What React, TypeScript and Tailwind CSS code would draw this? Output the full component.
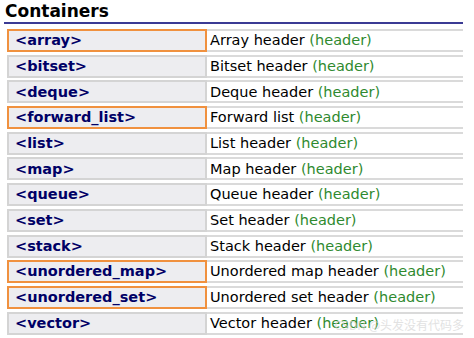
import React from 'react';

const rows = [
  { name: '<array>', desc: 'Array header', hl: true },
  { name: '<bitset>', desc: 'Bitset header', hl: false },
  { name: '<deque>', desc: 'Deque header', hl: false },
  { name: '<forward_list>', desc: 'Forward list', hl: true },
  { name: '<list>', desc: 'List header', hl: false },
  { name: '<map>', desc: 'Map header', hl: false },
  { name: '<queue>', desc: 'Queue header', hl: false },
  { name: '<set>', desc: 'Set header', hl: false },
  { name: '<stack>', desc: 'Stack header', hl: false },
  { name: '<unordered_map>', desc: 'Unordered map header', hl: true },
  { name: '<unordered_set>', desc: 'Unordered set header', hl: true },
  { name: '<vector>', desc: 'Vector header', hl: false },
];

export default function App() {
  return (
    <div className="relative w-[474px] h-[338px] bg-white overflow-hidden font-['DejaVu_Sans',Verdana,sans-serif]">
      <div className="pl-[5px] pt-[2px] w-[463px]">
        <h1 className="text-[17px] font-bold leading-[19px] text-black">Containers</h1>
        <div className="mt-[1px] h-[2px] bg-[#3b3b94] ml-[-1px]" />
      </div>

      <div className="pl-[7px] pt-[5px] w-[463px] flex flex-col gap-[2.7px]">
        {rows.map((r) => (
          <div key={r.name} className="flex h-[23px]">
            <div
              className={`w-[200px] flex items-center pl-[6px] border-2 ${
                r.hl ? 'border-[#f0913f]' : 'border-[#d4d4d4]'
              } bg-[#ededf0]`}
            >
              <span className="text-[14.5px] font-bold text-[#000066] leading-none">{r.name}</span>
            </div>
            <div className="flex-1 flex items-center pl-[3px] border-y-2 border-[#dadada] bg-white">
              <span className="text-[14.5px] text-black leading-none">
                {r.desc} <span className="text-[#2f8a2f]">(header)</span>
              </span>
            </div>
          </div>
        ))}
      </div>

      <div className="absolute right-[10px] bottom-[4px] text-[12px] text-[#d6d6d6] font-['Noto_Sans_CJK_SC',sans-serif] opacity-70">
        CSDN @头发没有代码多
      </div>
    </div>
  );
}
